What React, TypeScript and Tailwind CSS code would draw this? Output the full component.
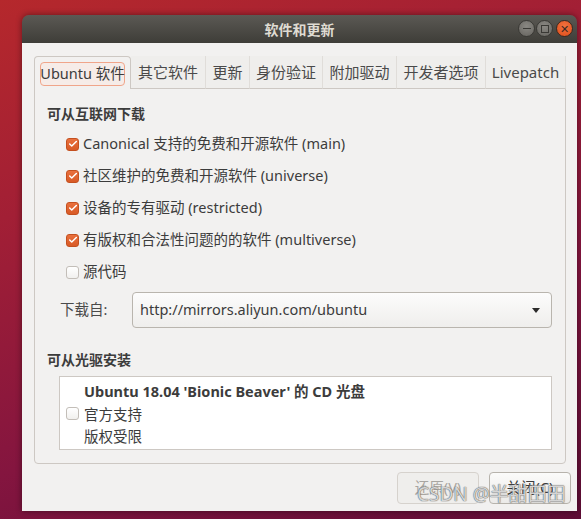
import { Check } from "lucide-react";

const FONT = "font-['Noto_Sans','Noto_Sans_CJK_SC',sans-serif]";

const tabs = [
  { label: "Ubuntu 软件", w: "w-[97px]", active: true },
  { label: "其它软件", w: "w-[75px]" },
  { label: "更新", w: "w-[44px]" },
  { label: "身份验证", w: "w-[73px]" },
  { label: "附加驱动", w: "w-[74px]" },
  { label: "开发者选项", w: "w-[89px]" },
  { label: "Livepatch", w: "w-[80px]" },
];

const sources = [
  { label: "Canonical 支持的免费和开源软件 (main)", checked: true },
  { label: "社区维护的免费和开源软件 (universe)", checked: true },
  { label: "设备的专有驱动 (restricted)", checked: true },
  { label: "有版权和合法性问题的的软件 (multiverse)", checked: true },
  { label: "源代码", checked: false },
];

function CheckBox({ checked }: { checked: boolean }) {
  if (checked) {
    return (
      <span className="flex h-[13px] w-[13px] shrink-0 items-center justify-center rounded-[3px] border border-[#c4501f] bg-[linear-gradient(#e9703d,#d85a26)]">
        <Check size={10} strokeWidth={3.5} className="text-white" />
      </span>
    );
  }
  return (
    <span className="h-[13px] w-[13px] shrink-0 rounded-[3px] border border-[#c3beb8] bg-[linear-gradient(#ffffff,#f1f0ee)]" />
  );
}

export default function App() {
  return (
    <div
      className={`${FONT} relative h-[519px] w-[581px] overflow-hidden bg-[linear-gradient(160deg,#b5282c_0%,#a21f35_30%,#84153f_65%,#5e0d36_100%)] pl-[22px] pt-[15px]`}
    >
      <div className="flex h-[496px] w-[555px] flex-col overflow-hidden rounded-t-[7px] shadow-[0_0_6px_rgba(0,0,0,0.45)]">
        {/* title bar */}
        <div className="relative flex h-[28px] shrink-0 items-center justify-center bg-[linear-gradient(#5b5954,#3e3d38)]">
          <span className="text-[14px] font-bold text-[#dfdbd2]">软件和更新</span>
          <div className="absolute right-[4px] top-[5px] flex items-center gap-[1px]">
            <span className="flex h-[17px] w-[17px] items-center justify-center rounded-full border border-[#3a3935] bg-[radial-gradient(circle_at_50%_35%,#8a8883,#65635e)]">
              <span className="h-[1.5px] w-[8px] bg-[#3a3935]" />
            </span>
            <span className="flex h-[17px] w-[17px] items-center justify-center rounded-full border border-[#3a3935] bg-[radial-gradient(circle_at_50%_35%,#8a8883,#65635e)]">
              <span className="h-[8px] w-[8px] border-[1.5px] border-[#3a3935]" />
            </span>
            <span className="ml-[2px] flex h-[17px] w-[17px] items-center justify-center rounded-full border border-[#3b2a22] bg-[radial-gradient(circle_at_50%_35%,#f2723f,#dd4d1a)] text-[11px] leading-none text-[#3a2a22]">
              ✕
            </span>
          </div>
        </div>

        {/* body */}
        <div className="flex flex-1 flex-col bg-[#f2f1f0] pl-[12px] pr-[6px] pt-[13px] text-[#3c3c3c]">
          <div className="w-[532px]">
            {/* tabs */}
            <div className="relative z-10 flex h-[33px]">
              {tabs.map((t) => (
                <div
                  key={t.label}
                  className={
                    t.active
                      ? `${t.w} flex items-center justify-center rounded-t-[4px] border border-b-0 border-[#cdc8c3] bg-[#f2f1f0] pt-[1px]`
                      : `${t.w} flex items-center justify-center whitespace-nowrap border-b border-r border-[#cdc8c3] border-r-[#e0ddd9] bg-[#efeeec] pt-[1px] text-[15px] text-[#4a4a4a]`
                  }
                >
                  {t.active ? (
                    <span className="flex h-[24px] w-[85px] items-center justify-center whitespace-nowrap rounded-[4px] border border-[#f0a58a] bg-[#f6ece8] text-[14.5px] text-[#3c3c3c]">
                      {t.label}
                    </span>
                  ) : (
                    <span>{t.label}</span>
                  )}
                </div>
              ))}
            </div>

            {/* frame */}
            <div className="-mt-px flex h-[376px] flex-col rounded-b-[4px] border border-[#cdc8c3] pl-[12px] pr-[13px] pt-[15px]">
              <div className="text-[14px] font-bold leading-[20px]">可从互联网下载</div>
              <div className="mt-[4px] flex flex-col">
                {sources.map((s) => (
                  <div key={s.label} className="flex h-[32px] items-center gap-[4px] pl-[19px] text-[14.5px]">
                    <CheckBox checked={s.checked} />
                    <span>{s.label}</span>
                  </div>
                ))}
              </div>

              <div className="mt-[4px] flex h-[36px] items-center">
                <span className="w-[85px] pl-[13px] text-[14.5px] text-[#4a4a4a]">下载自:</span>
                <div className="flex h-[36px] flex-1 items-center justify-between rounded-[4px] border border-[#b9b5ae] bg-[linear-gradient(#fcfcfc,#efeeec)] pl-[7px] pr-[11px] text-[14.5px]">
                  <span>http://mirrors.aliyun.com/ubuntu</span>
                  <span className="h-0 w-0 border-x-[4.5px] border-t-[5px] border-x-transparent border-t-[#2b2b2b]" />
                </div>
              </div>

              <div className="mt-[22px] text-[14px] font-bold leading-[20px]">可从光驱安装</div>
              <div className="ml-[12px] mt-[6px] flex h-[74px] items-center border border-[#cdc8c3] bg-white pl-[6px]">
                <CheckBox checked={false} />
                <div className="ml-[5px] flex flex-col pt-[2px] text-[14.5px] leading-[22.5px]">
                  <span className="font-bold">Ubuntu 18.04 'Bionic Beaver' 的 CD 光盘</span>
                  <span>官方支持</span>
                  <span>版权受限</span>
                </div>
              </div>
            </div>
          </div>

          {/* buttons */}
          <div className="mt-[8px] flex justify-end gap-[10px]">
            <button className="h-[32px] w-[82px] rounded-[4px] border border-[#d6d2cd] bg-[#efeeec] text-[14.5px] text-[#a9a6a1]">
              还原(V)
            </button>
            <button className="h-[32px] w-[82px] rounded-[4px] border border-[#b7b3ac] bg-[linear-gradient(#fbfbfa,#ebeae8)] text-[14.5px] text-[#3c3c3c]">
              关闭(C)
            </button>
          </div>
        </div>
      </div>

      {/* watermark */}
      <span className="absolute left-[417px] top-[485px] text-[19px] leading-none text-white/75 [text-shadow:0_0_1px_#555,0_0_1px_#555]">
        CSDN @半甜田田
      </span>
    </div>
  );
}
